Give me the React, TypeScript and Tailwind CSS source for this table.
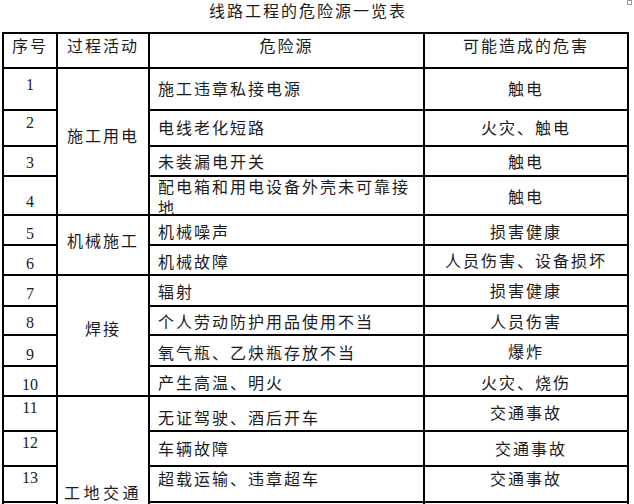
import React from "react";

const zh = { fontFamily: '"Noto Sans CJK SC", "Noto Sans", sans-serif' };
const num = { fontFamily: '"Liberation Serif", "Noto Sans CJK SC", serif' };

type Row = {
  n: string;
  np: string;
  t: React.ReactNode;
  tp: string;
  r: string;
  rp: string;
  rx?: string;
};

const rows: Row[] = [
  { n: "1", np: "pt-[6px]", t: "施工违章私接电源", tp: "pt-[9px]", r: "触电", rp: "pt-[9px]" },
  { n: "2", np: "pt-[2px]", t: "电线老化短路", tp: "pt-[6px]", r: "火灾、触电", rp: "pt-[6px]" },
  { n: "3", np: "pt-[6px]", t: "未装漏电开关", tp: "pt-[4px]", r: "触电", rp: "pt-[4px]" },
  {
    n: "4",
    np: "pt-[15px]",
    t: (
      <>
        配电箱和用电设备外壳未可靠接
        <br />地
      </>
    ),
    tp: "pt-0 -mt-[1px] leading-[21px]",
    r: "触电",
    rp: "pt-[9px]",
  },
  { n: "5", np: "pt-[8px]", t: "机械噪声", tp: "pt-[5px]", r: "损害健康", rp: "pt-[5px]" },
  { n: "6", np: "pt-[8px]", t: "机械故障", tp: "pt-[5px]", r: "人员伤害、设备损坏", rp: "pt-[4px]" },
  { n: "7", np: "pt-[8px]", t: "辐射", tp: "pt-[5px]", r: "损害健康", rp: "pt-[4px]" },
  { n: "8", np: "pt-[6px]", t: "个人劳动防护用品使用不当", tp: "pt-[4px]", r: "人员伤害", rp: "pt-[4px]" },
  { n: "9", np: "pt-[9px]", t: "氧气瓶、乙炔瓶存放不当", tp: "pt-[6px]", r: "爆炸", rp: "pt-[5px]" },
  { n: "10", np: "pt-[8px]", t: "产生高温、明火", tp: "pt-[5px]", r: "火灾、烧伤", rp: "pt-[5px]" },
  { n: "11", np: "pt-[1px]", t: "无证驾驶、酒后开车", tp: "pt-[10px]", r: "交通事故", rp: "pt-[5px]" },
  { n: "12", np: "pt-[1px]", t: "车辆故障", tp: "pt-[6px]", r: "交通事故", rp: "pt-[6px]", rx: "pl-[10px]" },
  { n: "13", np: "pt-[1px]", t: "超载运输、违章超车", tp: "pt-[1px]", r: "交通事故", rp: "pt-[1px]" },
  { n: "", np: "pt-[1px]", t: "", tp: "pt-[1px]", r: "", rp: "pt-[1px]" },
];

const cell = "border-r-2 border-b-2 border-black text-[16px] leading-[20px]";

const groups: { span: string; row: string; pt: string; lines: React.ReactNode; extra?: string }[] = [
  { span: "row-span-4", row: "row-start-2", pt: "pt-[56px]", lines: "施工用电" },
  { span: "row-span-2", row: "row-start-6", pt: "pt-[14px]", lines: "机械施工" },
  { span: "row-span-4", row: "row-start-8", pt: "pt-[42px]", lines: "焊接" },
  {
    span: "row-span-4",
    row: "row-start-12",
    pt: "pt-[85px]",
    lines: (
      <>
        工地交通
        <br />
        运输
      </>
    ),
    extra: "tracking-[3.5px]",
  },
];

export default function App() {
  return (
    <div className="w-[634px] h-[504px] overflow-hidden bg-white text-[#1c1c1c]">
      <div className="flex h-[32px] items-start">
        <div className="pl-[209px] text-[16px] leading-[20px] tracking-[2px] whitespace-nowrap" style={zh}>
          线路工程的危险源一览表
        </div>
        <div className="ml-auto mr-[2px] w-[5px] h-[5px] border border-[#9a9a9a]" />
      </div>
      <div
        className="ml-[2px] w-[627px] grid grid-cols-[54px_92px_275px_204px] grid-rows-[35px_42px_36px_30px_39px_30px_30px_31px_29px_31px_30px_35px_35px_36px_36px] border-l-2 border-t-2 border-black"
        style={zh}
      >
        <div className={`${cell} row-start-1 col-start-1 text-center pt-[1px] tracking-[2px]`}>序号</div>
        <div className={`${cell} row-start-1 col-start-2 pl-[9px] pt-[1px] tracking-[2px]`}>过程活动</div>
        <div className={`${cell} row-start-1 col-start-3 text-center pt-[1px] tracking-[2px]`}>危险源</div>
        <div className={`${cell} row-start-1 col-start-4 text-center pt-[1px] tracking-[2px]`}>可能造成的危害</div>

        {rows.map((r, i) => (
          <React.Fragment key={i}>
            <div
              className={`${cell} col-start-1 text-center ${r.np}`}
              style={{ ...num, gridRowStart: i + 2 }}
            >
              {r.n}
            </div>
            <div
              className={`${cell} col-start-3 pl-[8px] tracking-[2px] ${r.tp}`}
              style={{ gridRowStart: i + 2 }}
            >
              <div>{r.t}</div>
            </div>
            <div
              className={`${cell} col-start-4 text-center tracking-[2px] ${r.rp} ${r.rx ?? ""}`}
              style={{ gridRowStart: i + 2 }}
            >
              {r.r}
            </div>
          </React.Fragment>
        ))}

        {groups.map((g, i) => (
          <div
            key={i}
            className={`${cell} col-start-2 ${g.row} ${g.span} text-center ${g.pt} ${g.extra ?? "tracking-[2px]"}`}
          >
            {g.lines}
          </div>
        ))}
      </div>
    </div>
  );
}
